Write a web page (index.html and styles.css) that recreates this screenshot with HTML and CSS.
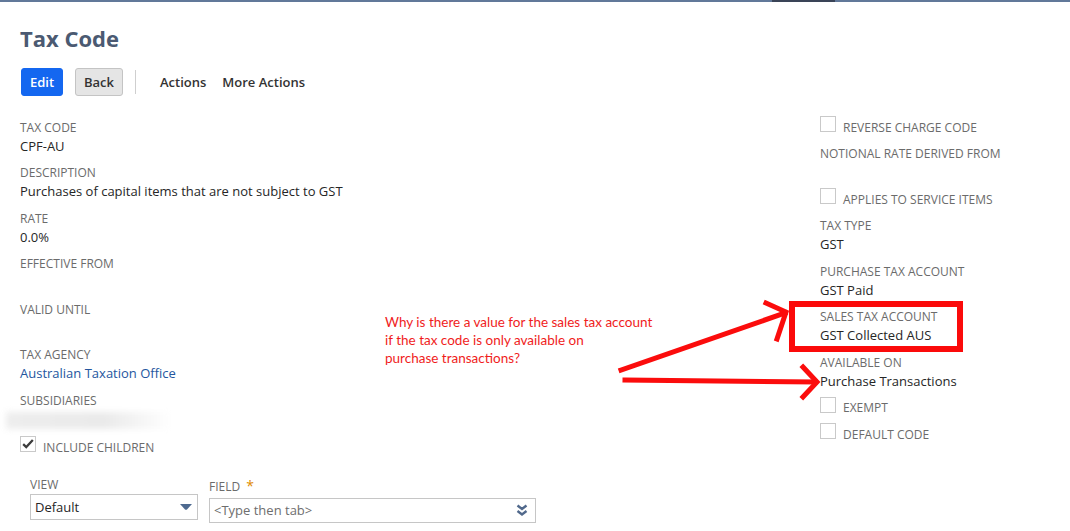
FILE: index.html
```html
<!DOCTYPE html>
<html lang="en">
<head>
  <meta charset="UTF-8" />
  <meta name="viewport" content="width=device-width, initial-scale=1.0" />
  <title>Tax Code</title>
  <link rel="stylesheet" href="styles.css">
</head>
<body>
  <div class="topbar"><span class="topbar-active"></span></div>

  <main class="page">
    <h1 class="page-title">Tax Code</h1>

    <div class="toolbar">
      <button class="btn btn-primary">Edit</button>
      <button class="btn btn-secondary">Back</button>
      <span class="toolbar-sep"></span>
      <a class="menu-link">Actions</a>
      <a class="menu-link">More Actions</a>
    </div>

    <div class="columns">
      <div class="col-left">
        <div class="field">
          <div class="field-label">Tax Code</div>
          <div class="field-value">CPF-AU</div>
        </div>
        <div class="field">
          <div class="field-label">Description</div>
          <div class="field-value">Purchases of capital items that are not subject to GST</div>
        </div>
        <div class="field">
          <div class="field-label">Rate</div>
          <div class="field-value">0.0%</div>
        </div>
        <div class="field">
          <div class="field-label">Effective From</div>
          <div class="field-value"></div>
        </div>
        <div class="field">
          <div class="field-label">Valid Until</div>
          <div class="field-value"></div>
        </div>
        <div class="field">
          <div class="field-label">Tax Agency</div>
          <div class="field-value"><a class="link">Australian Taxation Office</a></div>
        </div>
        <div class="field">
          <div class="field-label">Subsidiaries</div>
          <div class="field-value"><span class="redacted"></span></div>
        </div>
        <div class="check-row">
          <span class="checkbox checked">
            <svg viewBox="0 0 16 16" width="14" height="14"><path d="M2.5 8.2 L6 11.5 L13.5 3.5" fill="none" stroke="#3c3c3c" stroke-width="2.6"/></svg>
          </span>
          <span class="field-label">Include Children</span>
        </div>
      </div>

      <div class="col-right">
        <div class="check-row">
          <span class="checkbox"></span>
          <span class="field-label">Reverse Charge Code</span>
        </div>
        <div class="field">
          <div class="field-label">Notional Rate Derived From</div>
          <div class="field-value"></div>
        </div>
        <div class="check-row">
          <span class="checkbox"></span>
          <span class="field-label">Applies To Service Items</span>
        </div>
        <div class="field">
          <div class="field-label">Tax Type</div>
          <div class="field-value">GST</div>
        </div>
        <div class="field">
          <div class="field-label">Purchase Tax Account</div>
          <div class="field-value">GST Paid</div>
        </div>
        <div class="field">
          <div class="field-label">Sales Tax Account</div>
          <div class="field-value">GST Collected AUS</div>
        </div>
        <div class="field">
          <div class="field-label">Available On</div>
          <div class="field-value">Purchase Transactions</div>
        </div>
        <div class="check-row">
          <span class="checkbox"></span>
          <span class="field-label">Exempt</span>
        </div>
        <div class="check-row">
          <span class="checkbox"></span>
          <span class="field-label">Default Code</span>
        </div>
      </div>
    </div>

    <div class="sublist-controls">
      <div class="control">
        <div class="field-label">View</div>
        <div class="select">
          <span>Default</span>
          <svg viewBox="0 0 12 6" width="12" height="6"><path d="M0 0 H12 L7 5.5 Q6 6.2 5 5.5 Z" fill="#4e6a90"/></svg>
        </div>
      </div>
      <div class="control">
        <div class="field-label field-label-tall">Field <span class="required">*</span></div>
        <div class="input">
          <span class="placeholder">&lt;Type then tab&gt;</span>
          <svg viewBox="0 0 12 13" width="12" height="13"><path d="M1.5 1.5 L6 5 L10.5 1.5 M1.5 7 L6 10.5 L10.5 7" fill="none" stroke="#51698c" stroke-width="2.4"/></svg>
        </div>
      </div>
    </div>

    <!-- review markup drawn on top of the record -->
    <p class="note">Why is there a value for the sales tax account<br>if the tax code is only available on<br>purchase transactions?</p>
    <div class="note-box"></div>
    <svg class="note-arrows" width="1070" height="531" viewBox="0 0 1070 531">
      <g fill="none" stroke="#fb0c0c" stroke-width="5" stroke-linecap="square">
        <path d="M621 370 L785 313"/>
        <path d="M766 303 L786 312 L777 339"/>
        <path d="M625 380 L815 382"/>
        <path d="M803 367 L817 382 L803 397"/>
      </g>
    </svg>
  </main>
</body>
</html>
```

FILE: styles.css
```css
body {
  margin: 0;
  font-family: "Open Sans", Arial, sans-serif;
  color: #262626;
  background: #fff;
}
.topbar {
  height: 2px;
  background: #617899;
}
.topbar-active {
  display: block;
  margin-left: 772px;
  width: 63px;
  height: 2px;
  background: #3a4457;
}
.page {
  position: relative;
  height: 529px;
  padding: 0 0 0 20px;
  box-sizing: border-box;
  overflow: hidden;
}
.page-title {
  margin: 0;
  padding-top: 21px;
  font-size: 22px;
  line-height: 30px;
  font-weight: 700;
  color: #4b5a72;
}
.toolbar {
  display: flex;
  align-items: center;
  margin-top: 15px;
  height: 28px;
}
.btn {
  font-family: "Open Sans", Arial, sans-serif;
  font-size: 13px;
  font-weight: 600;
  height: 28px;
  padding: 0 12px;
  border-radius: 3px;
  cursor: pointer;
}
.btn-primary {
  margin-left: 1px;
  background: #1467f0;
  border: 1px solid #1467f0;
  color: #fff;
  width: 42px;
  padding: 0;
}
.btn-secondary {
  margin-left: 12px;
  background: #e5e5e5;
  border: 1px solid #c4c4c4;
  color: #333;
  width: 48px;
  padding: 0;
}
.toolbar-sep {
  width: 1px;
  height: 24px;
  background: #cfcfcf;
  margin: 0 24px 0 12px;
}
.menu-link {
  font-size: 13px;
  font-weight: 600;
  color: #333;
  margin-right: 16px;
}
.columns {
  display: flex;
  margin-top: 21.5px;
}
.col-left {
  flex: 1;
}
.col-right {
  width: 250px;
}
.field {
  margin-bottom: 7.5px;
}
.field-label {
  font-size: 12px;
  line-height: 19px;
  text-transform: uppercase;
  color: #6b6b6b;
}
.field-value {
  font-size: 13px;
  line-height: 19px;
  min-height: 19px;
  color: #262626;
}
.link {
  color: #24569e;
}
.redacted {
  display: block;
  margin: 2px 0 0 -14px;
  width: 165px;
  height: 17px;
  background: linear-gradient(to right, #ededed 0%, #eaeaea 60%, #fff 100%);
  filter: blur(3px);
}
.check-row {
  display: flex;
  align-items: flex-start;
  gap: 7px;
  height: 19px;
  margin-bottom: 7.5px;
}
.checkbox {
  box-sizing: border-box;
  width: 16px;
  height: 16px;
  margin-top: -1.5px;
  border: 1px solid #c9c9c9;
  background: #fff;
  display: flex;
  align-items: center;
  justify-content: center;
}
.checkbox.checked {
  margin-top: -2.5px;
}
.sublist-controls {
  display: flex;
  gap: 11px;
  margin-top: 10px;
  padding-left: 10px;
}
.field-label-tall {
  line-height: 22px;
}
.required {
  color: #e08a00;
  font-size: 14px;
  margin-left: 3px;
}
.select, .input {
  box-sizing: border-box;
  display: flex;
  align-items: center;
  justify-content: space-between;
  border: 1px solid #c6c6c6;
  font-size: 13px;
}
.select {
  width: 168px;
  height: 26px;
  padding: 0 5px 0 4px;
  color: #262626;
}
.input {
  width: 327px;
  height: 25px;
  padding: 0 7px 0 4px;
}
.placeholder {
  color: #6e6e6e;
}
.note {
  position: absolute;
  left: 385px;
  top: 311px;
  margin: 0;
  font-family: Lato, "Open Sans", sans-serif;
  font-size: 13.5px;
  line-height: 18px;
  color: #f01c1c;
}
.note-box {
  position: absolute;
  left: 789px;
  top: 299px;
  width: 174px;
  height: 51px;
  box-sizing: border-box;
  border: 6px solid #fb0a0a;
}
.note-arrows {
  position: absolute;
  left: 0;
  top: -2px;
  pointer-events: none;
}
```
